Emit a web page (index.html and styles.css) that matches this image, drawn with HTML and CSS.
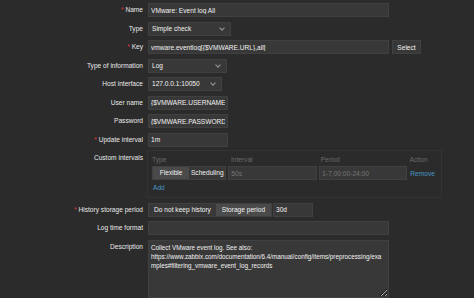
FILE: index.html
```html
<!DOCTYPE html>
<html lang="en">
<head>
    <meta charset="UTF-8">
    <meta name="viewport" content="width=device-width, initial-scale=1.0">
    <title>Item</title>
    <link rel="stylesheet" href="styles.css">
</head>
<body>
    <form class="form">
        <label class="label"><span class="req">*</span> Name</label>
        <div class="field"><input class="input w-long" type="text" value="VMware: Event log All"></div>

        <label class="label">Type</label>
        <div class="field"><div class="select w-type">Simple check<span class="arrow"></span></div></div>

        <label class="label"><span class="req">*</span> Key</label>
        <div class="field">
            <input class="input w-long" type="text" value="vmware.eventlog[{$VMWARE.URL},all]">
            <button type="button" class="btn">Select</button>
        </div>

        <label class="label">Type of information</label>
        <div class="field"><div class="select w-info">Log<span class="arrow"></span></div></div>

        <label class="label">Host interface</label>
        <div class="field"><div class="select w-host">127.0.0.1:10050<span class="arrow"></span></div></div>

        <label class="label">User name</label>
        <div class="field"><input class="input w-short" type="text" value="{$VMWARE.USERNAME}"></div>

        <label class="label">Password</label>
        <div class="field"><input class="input w-short" type="text" value="{$VMWARE.PASSWORD}"></div>

        <label class="label"><span class="req">*</span> Update interval</label>
        <div class="field"><input class="input w-short" type="text" value="1m"></div>

        <label class="label">Custom intervals</label>
        <div class="field">
            <div class="intervals">
                <div class="iv-row iv-head">
                    <span class="c-type">Type</span>
                    <span class="c-int">Interval</span>
                    <span class="c-per">Period</span>
                    <span class="c-act">Action</span>
                </div>
                <div class="iv-row">
                    <div class="seg c-type">
                        <span class="seg-btn active">Flexible</span>
                        <span class="seg-btn">Scheduling</span>
                    </div>
                    <input class="input c-int" type="text" placeholder="50s">
                    <input class="input c-per" type="text" placeholder="1-7,00:00-24:00">
                    <a class="link c-act" href="#">Remove</a>
                </div>
                <a class="link add" href="#">Add</a>
            </div>
        </div>

        <label class="label"><span class="req">*</span> History storage period</label>
        <div class="field field-tight">
            <div class="seg">
                <span class="seg-btn w-nokeep">Do not keep history</span>
                <span class="seg-btn w-storage active">Storage period</span>
            </div>
            <input class="input w-days" type="text" value="30d">
        </div>

        <label class="label">Log time format</label>
        <div class="field"><input class="input w-long" type="text" value=""></div>

        <label class="label">Description</label>
        <div class="field"><textarea class="textarea w-long">Collect VMware event log. See also:&#10;https://www.zabbix.com/documentation/6.4/manual/config/items/preprocessing/examples#filtering_vmware_event_log_records</textarea></div>
    </form>
</body>
</html>
```

FILE: styles.css
```css
body {
    margin: 0;
    background: #2b2b2b;
    color: #f2f2f2;
    font-family: "Liberation Sans", Arial, sans-serif;
    font-size: 6.6px;
    overflow: hidden;
}
.form {
    display: grid;
    grid-template-columns: 143px 1fr;
    column-gap: 5px;
    row-gap: 4.5px;
    padding-top: 3px;
}
.label {
    text-align: right;
    line-height: 14px;
    white-space: nowrap;
    color: #e8e8e8;
}
.req {
    color: #e33734;
}
.field {
    display: flex;
    align-items: flex-start;
    gap: 3px;
}
.field-tight {
    gap: 1px;
}
.input,
.select,
.textarea {
    box-sizing: border-box;
    height: 14px;
    margin: 0;
    padding: 0 2px;
    background: #383838;
    border: 1px solid #404040;
    color: #f2f2f2;
    font: inherit;
    outline: none;
}
.input::placeholder {
    color: #777;
}
.select {
    position: relative;
    line-height: 12px;
    padding-left: 3px;
}
.arrow {
    position: absolute;
    right: 6px;
    top: 3px;
    width: 3px;
    height: 3px;
    border-right: 1px solid #9a9a9a;
    border-bottom: 1px solid #9a9a9a;
    transform: rotate(45deg);
}
.w-long { width: 241px; }
.w-type { width: 83px; }
.w-info { width: 79px; }
.w-host { width: 74px; }
.w-short { width: 80px; }
.w-days { width: 40px; }
.w-nokeep { width: 67px; }
.w-storage { width: 55px; }
.btn {
    height: 14px;
    width: 29px;
    padding: 0;
    background: #383838;
    border: 1px solid #404040;
    color: #f2f2f2;
    font: inherit;
}
.intervals {
    box-sizing: border-box;
    width: 295px;
    height: 48px;
    margin: -1px 0 0 -1px;
    padding: 2px 4px 0;
    border: 1px solid #333;
}
.iv-row {
    display: flex;
    align-items: center;
    gap: 2px;
}
.iv-head {
    color: #6a6a6a;
    height: 12px;
    margin-bottom: 1px;
}
.c-type { width: 78px; }
.c-int { width: 89px; }
.c-per { width: 88px; }
.c-act { width: 28px; }
.seg {
    display: flex;
    height: 14px;
    background: #383838;
    border: 1px solid #404040;
    box-sizing: border-box;
}
.seg-btn {
    line-height: 12px;
    white-space: nowrap;
    text-align: center;
}
.seg-btn.active {
    background: #4a4a4a;
}
.iv-row .seg-btn {
    flex: 1;
}
.link {
    color: #4796c4;
    text-decoration: none;
}
.c-act.link {
    margin-left: 1px;
}
.add {
    display: inline-block;
    margin-top: 4px;
    margin-left: 1px;
}
.textarea {
    height: 58px;
    padding: 2px;
    resize: both;
    word-break: break-all;
    font-size: 6.3px;
    line-height: 9px;
}
```
